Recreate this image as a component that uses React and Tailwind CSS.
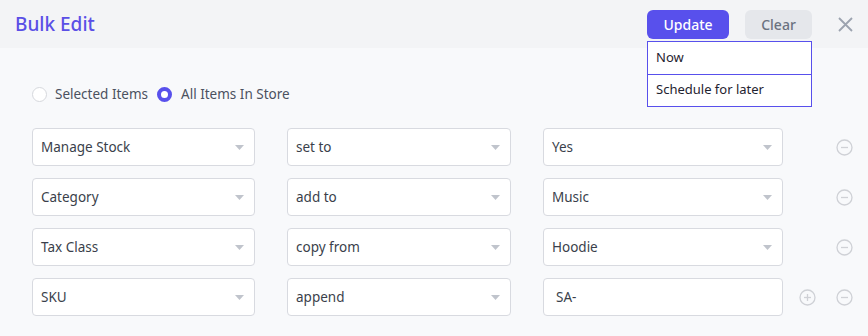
import React from "react";

const font = { fontFamily: '"Noto Sans", "Liberation Sans", sans-serif' };

function Caret() {
  return (
    <svg width="9" height="5" viewBox="0 0 9 5" className="shrink-0">
      <path d="M0 0 L9 0 L4.5 5 Z" fill="#c0c4cc" />
    </svg>
  );
}

function Select({ label, w }) {
  return (
    <div className={`${w} shrink-0 h-[38px] bg-white border border-[#d8dae0] rounded-[4px] flex items-center justify-between pl-[8px] pr-[10px] text-[13.5px] text-[#3a3f4b]`}>
      <span>{label}</span>
      <Caret />
    </div>
  );
}

function CircleIcon({ plus }) {
  return (
    <svg width="17" height="17" viewBox="0 0 17 17" className="shrink-0">
      <circle cx="8.5" cy="8.5" r="7.5" fill="none" stroke="#cfd1d6" strokeWidth="1.3" />
      <path d="M5 8.5 H12" stroke="#cfd1d6" strokeWidth="1.3" />
      {plus && <path d="M8.5 5 V12" stroke="#cfd1d6" strokeWidth="1.3" />}
    </svg>
  );
}

const rows = [
  ["Manage Stock", "set to", "Yes", false],
  ["Category", "add to", "Music", false],
  ["Tax Class", "copy from", "Hoodie", false],
  ["SKU", "append", "SA-", true],
];

export default function App() {
  return (
    <div className="w-[868px] h-[336px] bg-[#f8f9fb] overflow-hidden" style={font}>
      <div className="h-[48px] bg-[#f3f4f6] flex items-center pl-[15px] pr-[15px]">
        <div className="text-[19px] font-medium text-[#5a4fe6] leading-none">Bulk Edit</div>
        <div className="ml-auto flex items-center">
          <div className="relative">
            <button className="w-[82px] h-[29px] rounded-[6px] bg-[#5850ec] text-white text-[14px] font-medium">Update</button>
            <div className="absolute left-0 top-[31px] w-[165px] bg-white border border-[#5850ec] text-[13px] text-[#1f2330] z-10">
              <div className="h-[33px] flex items-center pl-[8px] border-b border-[#5850ec]">Now</div>
              <div className="h-[31px] flex items-center pl-[8px]">Schedule for later</div>
            </div>
          </div>
          <button className="ml-[16px] w-[67px] h-[29px] rounded-[6px] bg-[#e5e7eb] text-[#6b7280] text-[14px] font-medium">Clear</button>
          <svg className="ml-[26px]" width="15" height="15" viewBox="0 0 15 15">
            <path d="M1 1 L14 14 M14 1 L1 14" stroke="#9ca3af" strokeWidth="1.8" />
          </svg>
        </div>
      </div>
      <div className="pl-[32px] pt-[37px]">
        <div className="flex items-center h-[18px] text-[13.5px] text-[#4b5160]">
          <span className="shrink-0 w-[15px] h-[15px] rounded-full border border-[#d6d8dd] bg-white"></span>
          <span className="ml-[8px]">Selected Items</span>
          <span className="shrink-0 ml-[9px] w-[15px] h-[15px] rounded-full border-[4px] border-[#5850ec] bg-white"></span>
          <span className="ml-[9px]">All Items In Store</span>
        </div>
        <div className="mt-[25px] flex flex-col gap-[12px]">
          {rows.map(([a, b, c, input], i) => (
            <div key={i} className="flex items-center">
              <Select label={a} w="w-[223px]" />
              <div className="w-[32px] shrink-0" />
              <Select label={b} w="w-[224px]" />
              <div className="w-[32px] shrink-0" />
              {input ? (
                <div className="w-[240px] shrink-0 h-[38px] bg-white border border-[#d8dae0] rounded-[4px] flex items-center pl-[12px] text-[13.5px] text-[#3a3f4b]">{c}</div>
              ) : (
                <Select label={c} w="w-[240px]" />
              )}
              <div className="w-[33px] shrink-0 flex justify-end">{input && <CircleIcon plus />}</div>
              <div className="ml-[20px] shrink-0"><CircleIcon /></div>
            </div>
          ))}
        </div>
      </div>
    </div>
  );
}
